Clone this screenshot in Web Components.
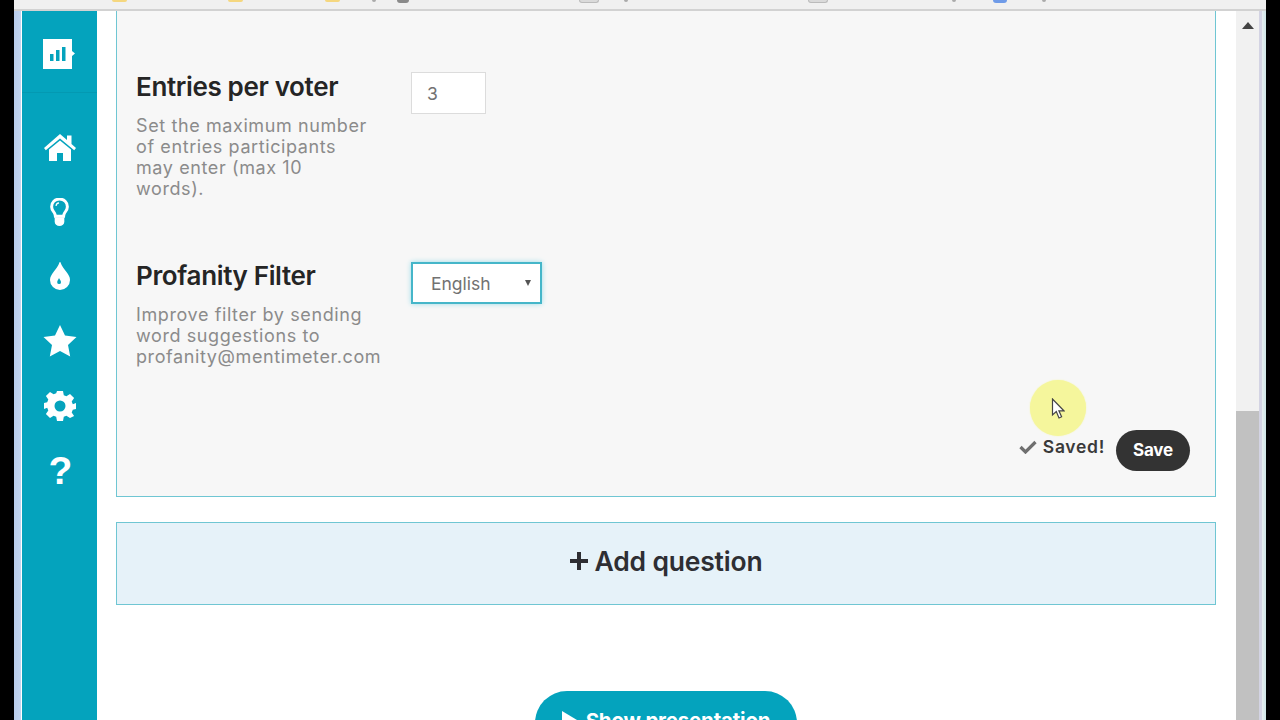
<!DOCTYPE html>
<html lang="en">
<head>
<meta charset="utf-8">
<title>Settings</title>
<style>
html,body{margin:0;height:720px;overflow:hidden;background:#000}
body{font-family:"Inter","Noto Sans","Liberation Sans",sans-serif}
</style>
</head>
<body>
<x-app>
  <x-chrome slot="chrome"></x-chrome>
  <x-sidebar slot="side">
    <x-nav-icon kind="logo" slot="logo"></x-nav-icon>
    <x-nav-icon kind="home"></x-nav-icon>
    <x-nav-icon kind="bulb"></x-nav-icon>
    <x-nav-icon kind="drop"></x-nav-icon>
    <x-nav-icon kind="star"></x-nav-icon>
    <x-nav-icon kind="cog"></x-nav-icon>
    <x-nav-icon kind="help"></x-nav-icon>
  </x-sidebar>
  <x-panel>
    <x-setting-row heading="Entries per voter">
      <span slot="desc">Set the maximum number<br>of entries participants<br>may enter (max 10<br>words).</span>
      <x-field slot="control" value="3"></x-field>
    </x-setting-row>
    <x-setting-row heading="Profanity Filter">
      <span slot="desc">Improve filter by sending<br>word suggestions to<br>profanity@mentimeter.com</span>
      <x-field slot="control" value="English" select></x-field>
    </x-setting-row>
    <x-save-bar slot="foot"></x-save-bar>
  </x-panel>
  <x-add-question></x-add-question>
  <x-show-button></x-show-button>
  <x-scroll slot="scroll"></x-scroll>
  <x-pointer slot="pointer"></x-pointer>
</x-app>
<script>
function def(name, html, init){
  customElements.define(name, class extends HTMLElement{
    constructor(){super();this.attachShadow({mode:"open"}).innerHTML=typeof html==="function"?html(this):html;}
    connectedCallback(){
      if(init)init(this,this.shadowRoot);
    }
  });
}
def("x-app",`<style>
:host{display:flex;width:1280px;height:720px;background:#000;position:relative;overflow:hidden}
.blackL{width:14px;flex:none;background:#000}
.blackR{width:14px;flex:none;background:#000}
.win{flex:1;display:flex;flex-direction:column;min-width:0;background:#fff}
.row{flex:1;display:flex;min-height:0}
.frameL{width:8px;flex:none;background:linear-gradient(90deg,#b9cdec 0,#c3d5f0 85%,#fff 85%)}
.frameR{width:7px;flex:none;background:linear-gradient(90deg,#d3d3e3 0,#d3d3e3 40%,#e8eef0 40%,#cfe6e8 100%)}
.main{flex:1;min-width:0;overflow:hidden;padding:0 20px 0 19px;background:#fff;display:flex;flex-direction:column;align-items:stretch}
</style>
<div class="blackL"></div>
<div class="win">
  <slot name="chrome"></slot>
  <div class="row">
    <div class="frameL"></div>
    <slot name="side"></slot>
    <div class="main"><slot></slot></div>
    <slot name="scroll"></slot>
    <div class="frameR"></div>
  </div>
</div>
<div class="blackR"></div>
<slot name="pointer"></slot>`);

def("x-chrome",`<style>
:host{display:flex;height:9px;flex:none;background:#f0f0f0;border-bottom:2px solid #d2d2d2;box-sizing:content-box;overflow:hidden;align-items:flex-start}
i{display:block;height:2px;flex:none;border-radius:0 0 3px 3px}
.y{width:15px;background:#f5d77f}
.g{width:12px;height:3px;background:#8a8a8a}
.d{width:4px;background:#aaa}
.b{width:20px;height:3px;background:#dadada;border:1px solid #bbb;border-top:0;box-sizing:border-box}
.u{width:14px;height:3px;background:#6f9be8}
</style>
<i class="y" style="margin-left:98px"></i><i class="y" style="margin-left:101px"></i><i class="y" style="margin-left:82px"></i>
<i class="d" style="margin-left:32px"></i><i class="g" style="margin-left:21px"></i>
<i class="b" style="margin-left:170px"></i><i class="d" style="margin-left:25px"></i>
<i class="b" style="margin-left:180px"></i><i class="d" style="margin-left:124px"></i>
<i class="u" style="margin-left:37px"></i><i class="d" style="margin-left:35px"></i>`);

def("x-sidebar",`<style>
:host{display:flex;flex-direction:column;width:75px;flex:none;background:#04a3bd}
.head{height:81px;border-bottom:1px solid #0399b2;display:flex;align-items:center;justify-content:center;box-sizing:content-box;padding-top:0}
nav{display:flex;flex-direction:column;padding-top:22.200px}
</style>
<div class="head"><slot name="logo"></slot></div>
<nav><slot></slot></nav>`);

const icons={
 logo:`<svg width="34" height="30" viewBox="0 0 34 30"><path fill="#fff" d="M1 0h29v12l3 2.500-3 2.500v13H1z"/><g fill="#04a3bd"><rect x="8" y="15" width="3.500" height="7"/><rect x="14" y="11" width="3.500" height="11"/><rect x="20" y="8" width="3.500" height="14"/></g></svg>`,
 home:`<svg width="34" height="30" viewBox="0 -1 34 30"><path fill="#fff" d="M17 1 24 7V2.500h4.500V11L33 15l-1.800 2.200L17 5.500 2.800 17.200 1 15z"/><path fill="#fff" d="M17 7.500 28 16.500V28H20V20H14V28H6V16.500z"/></svg>`,
 bulb:`<svg width="21" height="29" viewBox="0 1 24 33"><path fill="none" stroke="#fff" stroke-width="3.400" d="M12 2.200c5.300 0 9 3.700 9 8.600 0 3.700-2.300 5.500-3.400 7.700-.6 1.200-.8 2.200-.9 3.300H7.300c-.1-1.100-.3-2.100-.9-3.300C5.300 16.300 3 14.500 3 10.800 3 5.900 6.700 2.200 12 2.200z"/><path fill="#fff" d="M6.500 23h11v5a5.500 5 0 0 1-11 0z"/><path fill="none" stroke="#fff" stroke-width="1.500" d="M8 10c.2-2 1.600-3.300 3.500-3.500"/></svg>`,
 drop:`<svg width="22" height="30" viewBox="0 1 22 30"><path fill="#fff" d="M11 0c1.500 5 4 7.500 6.500 11C19.500 13.700 21 16 21 19a10 10 0 0 1-20 0c0-3 1.500-5.300 3.500-8C7 7.500 9.500 5 11 0z"/><path fill="#04a3bd" d="M9.500 17c.5 1.500 2 2.500 2 4.200a1.900 1.900 0 0 1-3.800 0c0-1.700 1.400-2.700 1.800-4.200z" transform="translate(0.500 0)"/></svg>`,
 star:`<svg width="34" height="32" viewBox="0 0 34 32"><path fill="#fff" d="M17 0l5 10.500 11.500 1.500-8.500 8 2.200 11.500L17 26l-10.200 5.500L9 20 .5 12 12 10.500z"/></svg>`,
 cog:`<svg width="32" height="32" viewBox="0 0 32 32"><path fill="#fff" fill-rule="evenodd" d="M13 1h6l.8 4.200 2.600 1.100L26 3.900 30.100 8l-2.400 3.600 1.100 2.600L32 13v6l-3.200.8-1.100 2.600 2.400 3.600L26 28.100l-3.600-2.400-2.600 1.100L19 31h-6l-.8-4.200-2.600-1.100L6 28.100 1.900 24l2.400-3.600-1.100-2.600L0 19v-6l3.200-.8 1.100-2.600L1.900 6 6 1.900l3.600 2.400 2.600-1.100zM16 10.500a5.500 5.500 0 1 0 0 11 5.500 5.500 0 0 0 0-11z"/></svg>`,
 help:`<span style="font:700 39px/1 'Liberation Sans',sans-serif;color:#fff;display:block;margin-left:2px">?</span>`
};
def("x-nav-icon",`<style>
:host{display:flex;align-items:center;justify-content:center;height:64.600px}
:host([kind=logo]){height:auto;margin:5px 2px 0 0}
svg{display:block}
</style><span id="i" style="display:block"></span>`,(el,s)=>{s.getElementById("i").innerHTML=icons[el.getAttribute("kind")];});

def("x-panel",`<style>
:host{flex:none;height:486px;box-sizing:border-box;background:#f7f7f7;border:1px solid #6fc6d3;border-top:0;padding:60px 25px 0 19px;position:relative;display:flex;flex-direction:column}
.foot{margin-top:auto;padding-bottom:25px;display:flex;justify-content:flex-end}
</style>
<slot></slot><div class="foot"><slot name="foot"></slot></div>`);

def("x-setting-row",el=>`<style>
:host{display:grid;grid-template-columns:275px auto;justify-content:start;align-items:start;height:189px;flex:none}
:host(:last-of-type){height:auto}
h3{margin:0 0 13px;padding-top:1px;font:600 26px/30px "Inter","Noto Sans",sans-serif;letter-spacing:-.35px;color:#252525}
p{margin:0;font:400 18px/21px "Inter","Noto Sans",sans-serif;color:#8b8b8b;letter-spacing:.6px;white-space:nowrap}
</style>
<div><h3>${el.getAttribute("heading")}</h3><p><slot name="desc"></slot></p></div>
<div><slot name="control"></slot></div>`);

def("x-field",el=>{
 const sel=el.hasAttribute("select");
 return `<style>
:host{box-sizing:border-box;height:42px;width:${sel?131:75}px;margin-top:${sel?2:1}px;background:#fff;
 border:${sel?"2px solid #45b6c9":"1px solid #dcdcdc"};${sel?"box-shadow:0 0 5px #9adde8;":""}
 font:400 17.500px/1 "Inter","Noto Sans",sans-serif;color:#727272;position:relative;
 display:flex;align-items:center;justify-content:space-between;padding:${sel?"2px 9px 0 18px":"2px 0 0 15px"}}
b{width:0;height:0;border:3.500px solid transparent;border-top:6px solid #555;border-bottom:0;margin-top:-3px}
</style><span>${el.getAttribute("value")}</span>${sel?"<b></b>":""}`;
});

def("x-save-bar",`<style>
:host{display:flex;align-items:center;gap:11px}
.saved{display:flex;align-items:center;gap:6px;font:600 17.500px/1 "Inter","Noto Sans",sans-serif;color:#3a3a3a;letter-spacing:.7px;margin-top:-8px}
button{all:unset;box-sizing:border-box;width:74px;height:41px;border-radius:21px;background:#333;color:#fff;font:700 17px/41px "Inter","Noto Sans",sans-serif;text-align:center;letter-spacing:-.2px}
</style>
<span class="saved"><svg width="18" height="14" viewBox="0 0 18 14"><path fill="none" stroke="#6f6f6f" stroke-width="3.200" d="M1.500 7l5 5L16.500 2"/></svg>Saved!</span>
<button>Save</button>`);

def("x-add-question",`<style>
:host{display:flex;flex:none;align-items:center;justify-content:center;gap:7px;box-sizing:border-box;height:83px;margin-top:25px;padding-bottom:5px;background:#e6f2f9;border:1px solid #6fc6d3;font:600 26.500px/1 "Inter","Noto Sans",sans-serif;color:#2e2e33;letter-spacing:-.2px}
svg{display:block}
</style><svg width="18" height="18" viewBox="0 0 18 18"><path fill="#2e2e33" d="M7 0h4v7h7v4h-7v7H7v-7H0V7h7z"/></svg><span>Add question</span>`);

def("x-show-button",`<style>
:host{display:flex;flex:none;align-self:center;align-items:flex-start;justify-content:center;gap:9px;box-sizing:border-box;width:262px;height:64px;margin-top:86px;border-radius:32px;background:#04a3bd;color:#fff;font:700 20.500px/1 "Inter","Noto Sans",sans-serif;padding-top:20px;letter-spacing:-.2px}
svg{display:block}
</style><svg width="15" height="18" viewBox="0 0 15 18"><path fill="#fff" d="M0 0l15 9L0 18z"/></svg><span>Show presentation</span>`);

def("x-scroll",`<style>
:host{display:flex;flex-direction:column;width:23px;flex:none;background:#f1f1f1}
.up{height:28px;display:flex;justify-content:center;align-items:center}
.up b{width:0;height:0;border:6px solid transparent;border-bottom:7px solid #444;border-top:0}
.space{height:372px}
.thumb{flex:1;background:#c1c1c1}
</style><div class="up"><b></b></div><div class="space"></div><div class="thumb"></div>`);

def("x-pointer",`<style>
:host{position:absolute;left:1030px;top:380px;width:56px;height:56px;border-radius:50%;background:#f5f69c;box-shadow:0 0 1.500px #f5f69c;display:block}
svg{position:absolute;left:21px;top:18px}
</style><svg width="14" height="22" viewBox="0 0 14 22"><path fill="#fff" stroke="#444" stroke-width="1.200" d="M1.500 1v16l3.800-3.500L8 20l2.600-1.200-2.700-6h5z"/></svg>`);
</script>
</body>
</html>
